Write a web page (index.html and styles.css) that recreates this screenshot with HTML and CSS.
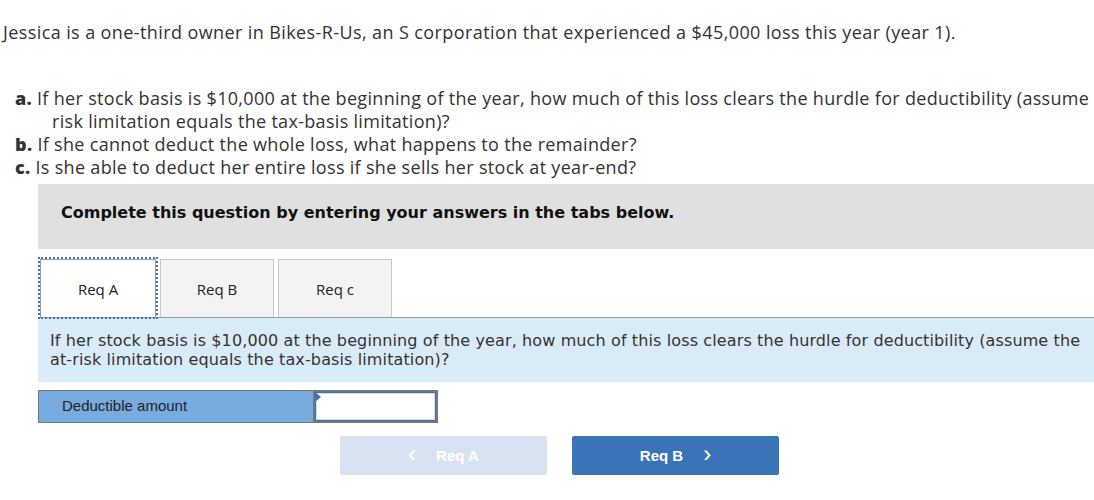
FILE: index.html
```html
<!DOCTYPE html>
<html>
<head>
<meta charset="utf-8">
<link rel="stylesheet" href="styles.css">
</head>
<body>
<div class="page">
  <p class="intro">Jessica is a one-third owner in Bikes-R-Us, an S corporation that experienced a $45,000 loss this year (year 1).</p>
  <ul class="questions">
    <li><b>a.</b> If her stock basis is $10,000 at the beginning of the year, how much of this loss clears the hurdle for deductibility (assume risk limitation equals the tax-basis limitation)?</li>
    <li><b>b.</b> If she cannot deduct the whole loss, what happens to the remainder?</li>
    <li><b>c.</b> Is she able to deduct her entire loss if she sells her stock at year-end?</li>
  </ul>
  <div class="work">
    <div class="notice">Complete this question by entering your answers in the tabs below.</div>
    <div class="tabs">
      <div class="tab active">Req A</div>
      <div class="tab">Req B</div>
      <div class="tab">Req c</div>
    </div>
    <div class="panel">If her stock basis is $10,000 at the beginning of the year, how much of this loss clears the hurdle for deductibility (assume the at-risk limitation equals the tax-basis limitation)?</div>
    <div class="answer">
      <div class="label">Deductible amount</div>
      <div class="input"><span class="flag"></span></div>
    </div>
    <div class="nav">
      <div class="btn disabled"><span class="chev">&lsaquo;</span>Req A</div>
      <div class="btn primary">Req B<span class="chev">&rsaquo;</span></div>
    </div>
  </div>
</div>
</body>
</html>
```

FILE: styles.css
```css
html, body {
  margin: 0;
  padding: 0;
  background: #fff;
  overflow: hidden;
}
.page {
  width: 1094px;
  font-family: "Open Sans", "Lato", sans-serif;
  color: #333;
}
.intro {
  margin: 0;
  padding: 21px 0 0 3px;
  font-size: 18px;
  letter-spacing: 0.4px;
  line-height: 23px;
}
.questions {
  list-style: none;
  margin: 0;
  padding: 43px 0 0 15px;
  font-size: 18px;
  letter-spacing: 0.31px;
  line-height: 23px;
}
.questions li {
  padding-left: 37px;
  text-indent: -37px;
}
.questions b {
  font-weight: 800;
}
.work {
  margin: 5px 0 0 38px;
  width: 1056px;
}
.notice {
  background: #e0e0e0;
  height: 65px;
  box-sizing: border-box;
  padding: 19px 0 0 23px;
  font-family: "DejaVu Sans", Verdana, sans-serif;
  font-weight: bold;
  font-size: 16px;
  color: #111;
}
.tabs {
  display: flex;
  gap: 4px;
  margin-top: 10px;
  padding-left: 2px;
}
.tab {
  width: 114px;
  height: 58px;
  box-sizing: border-box;
  border: 1px solid #c8c8c8;
  border-bottom: none;
  background: #f3f3f3;
  font-family: "Open Sans", sans-serif;
  font-size: 15px;
  color: #222;
  display: flex;
  align-items: center;
  justify-content: center;
}
.tab.active {
  background: #fff;
  border-color: #999;
  width: 116px;
  outline: 2px dotted #3a74b8;
  outline-offset: 0;
}
.panel {
  border-top: 1px solid #999;
  background: #daebf8;
  padding: 13px 0 13px 12px;
  font-family: "DejaVu Sans", Verdana, sans-serif;
  font-size: 16px;
  letter-spacing: 0.12px;
  line-height: 19px;
  color: #333;
}
.answer {
  display: flex;
  margin-top: 8px;
  height: 33px;
}
.label {
  width: 275px;
  box-sizing: border-box;
  background: #78abe0;
  border: 1px solid #777;
  border-right: none;
  padding: 6px 0 0 23px;
  font-family: "Liberation Sans", Arial, sans-serif;
  font-size: 15px;
  color: #222;
}
.input {
  position: relative;
  width: 125px;
  box-sizing: border-box;
  border: 2px solid #777;
  background: #fff;
  box-shadow: inset 0 0 0 1px #3a74b8, inset 0 0 0 2px #cfe0f4;
}
.flag {
  position: absolute;
  left: 0;
  top: 0;
  width: 0;
  height: 0;
  border-top: 5px solid transparent;
  border-bottom: 5px solid transparent;
  border-left: 6px solid #3a74b8;
}
.nav {
  display: flex;
  gap: 25px;
  margin-top: 13px;
  padding-left: 302px;
}
.btn {
  width: 207px;
  height: 39px;
  border-radius: 2px;
  display: flex;
  align-items: center;
  justify-content: center;
  font-family: "Liberation Sans", Arial, sans-serif;
  font-weight: bold;
  font-size: 15px;
  color: #fff;
}
.btn.disabled {
  background: #d8e3f1;
}
.btn.primary {
  background: #3a74b8;
}
.chev {
  font-size: 24px;
  font-weight: normal;
  line-height: 1;
  margin: -3px 20px 0;
}
.btn.disabled .chev { margin-left: 0; }
.btn.primary .chev { margin-right: 0; }
```
